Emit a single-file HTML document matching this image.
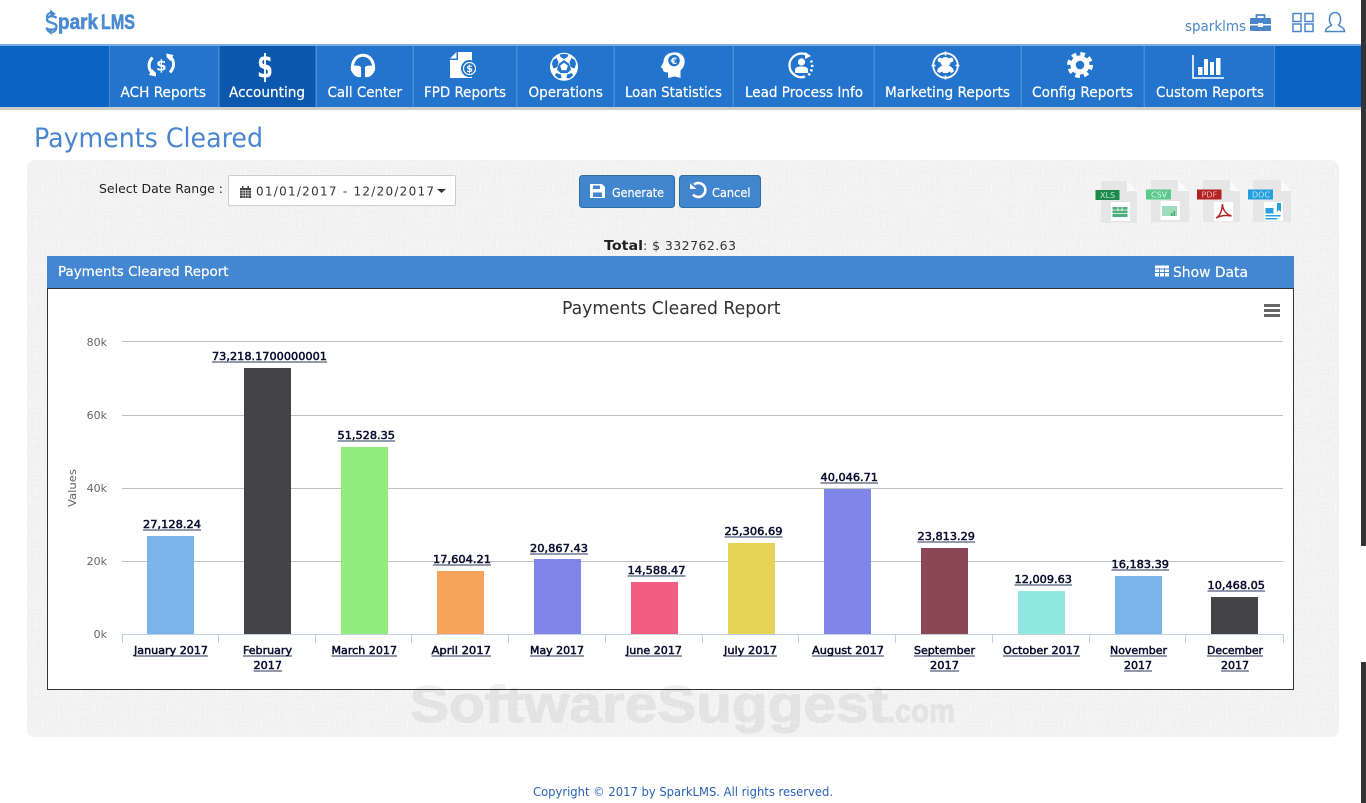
<!DOCTYPE html>
<html lang="en">
<head>
<meta charset="utf-8">
<title>Payments Cleared</title>
<style>
html,body{margin:0;padding:0;background:#fff;width:1366px;height:803px;overflow:hidden}
svg{display:block;position:absolute;left:0;top:0}
text{font-family:"DejaVu Sans","Liberation Sans",sans-serif}
.nav{fill:#fff;font-size:14px;stroke:#fff;stroke-width:.2}
.dl{fill:#0b0b2e;font-size:11px;stroke:#0b0b2e;stroke-width:.5}
.yl{fill:#666;font-size:11px}
.lg{font-family:"Liberation Sans",sans-serif;font-size:21px;font-weight:700;fill:#4a8ad0;stroke:#4a8ad0;stroke-width:.6}
</style>
</head>
<body>
<svg width="1366" height="803" viewBox="0 0 1366 803" xmlns="http://www.w3.org/2000/svg">
<defs>
<pattern id="tx" width="73" height="67" patternUnits="userSpaceOnUse">
<rect width="73" height="67" fill="#f3f3f3"/>
<path d="M3 5h9v6H3zM17 2h5v11h-5zM28 7h14v4H28zM48 3h7v7h-7zM60 6h10v9H60zM5 18h6v10H5zM15 21h12v5H15zM32 16h7v12h-7zM45 19h4v8h-4zM54 22h15v4H54zM2 35h13v4H2zM19 32h5v13h-5zM29 37h10v8H29zM44 33h8v5h-8zM57 35h5v15h-5zM66 32h5v7h-5zM7 48h7v9H7zM19 52h16v4H19zM40 47h5v15h-5zM50 53h6v6h-6zM61 56h9v5H61zM12 61h17v3H12z" fill="none" stroke="#eeeeee" stroke-width=".8"/>
<path d="M6 8h3M19 5v6M31 9h8M51 5v3M63 9h5v3M8 21v5M18 23h6M35 19v6M57 24h8M5 37h7M21 35v7M32 40h5M47 35h3M59 38v8M9 51v4M23 54h8M42 50v9M53 55v2M63 58h5" fill="none" stroke="#f8f8f8" stroke-width=".8"/>
</pattern>
</defs>

<!-- right edge strip -->
<rect x="1361" y="0" width="5" height="546" fill="#333"/>
<rect x="1361" y="662" width="5" height="141" fill="#333"/>

<!-- logo -->
<g fill="none" stroke="#4a8ad0" stroke-width="2.300">
<path d="M56.500 18C54 15.500 47 15.500 47 19.500C47 23.500 56.500 22 56.500 26.500C56.500 30.500 49 30.500 46 28"/>
<path d="M46.500 17C47 14 49 13 51 12.500M56.500 28C56 31 54 32 52 32.500" stroke-width="1.800"/>
</g>
<path d="M50 9.500l6 4.500-5.500 2.500zM52 35l-6-4.500 5.500-2.500z" fill="#4a8ad0"/>
<text class="lg" x="58" y="29" textLength="40" lengthAdjust="spacingAndGlyphs">park</text>
<text class="lg" x="101" y="29" textLength="34" lengthAdjust="spacingAndGlyphs">LMS</text>

<!-- header right -->
<text x="1185" y="31" font-size="14" fill="#4a86c8" textLength="61" lengthAdjust="spacingAndGlyphs">sparklms</text>
<path d="M1251 18h19a1 1 0 0 1 1 1v5h-8v-1h-5v1h-8v-5a1 1 0 0 1 1-1zM1250 25.500h8v1.500h5v-1.500h8V30a1 1 0 0 1-1 1h-19a1 1 0 0 1-1-1z" fill="#4a86c8"/>
<path d="M1256.500 18v-3h8v3" fill="none" stroke="#4a86c8" stroke-width="1.800"/>
<g fill="none" stroke="#4a86c8" stroke-width="1.500">
<rect x="1293" y="13.500" width="8" height="8"/><rect x="1305" y="13.500" width="8" height="8"/>
<rect x="1293" y="24" width="8" height="7.500"/><rect x="1305" y="24" width="8" height="7.500"/>
<path d="M1325.500 31.500c0-4 4-4.500 6-6.500c-3-3-3.500-12 3.500-12.500c7 .5 6.500 9.500 3.500 12.500c2 2 6 2.500 6 6.500z"/>
</g>

<!-- nav -->
<rect x="0" y="44" width="1361" height="2" fill="#79ade3"/>
<rect x="0" y="46" width="1361" height="61" fill="#0a64c4"/>
<rect x="0" y="107" width="1361" height="3" fill="#cccccc"/>
<rect x="109" y="46" width="1166" height="61" fill="#2374cc"/>
<rect x="219" y="46" width="97" height="61" fill="#0b58ae"/>
<g fill="#4a8bd6">
<rect x="109" y="46" width="1" height="61"/><rect x="218" y="46" width="1.500" height="61"/><rect x="315.500" y="46" width="1.500" height="61"/>
<rect x="412.500" y="46" width="1.500" height="61"/><rect x="516" y="46" width="1.500" height="61"/><rect x="613.500" y="46" width="1.500" height="61"/>
<rect x="732.500" y="46" width="1.500" height="61"/><rect x="873.500" y="46" width="1.500" height="61"/><rect x="1020.500" y="46" width="1.500" height="61"/>
<rect x="1143.500" y="46" width="1.500" height="61"/><rect x="1274" y="46" width="1" height="61"/>
</g>
<text class="nav" x="120.500" y="97" textLength="85.500" lengthAdjust="spacingAndGlyphs">ACH Reports</text>
<text class="nav" x="229" y="97" textLength="76" lengthAdjust="spacingAndGlyphs">Accounting</text>
<text class="nav" x="327.500" y="97" textLength="74.500" lengthAdjust="spacingAndGlyphs">Call Center</text>
<text class="nav" x="424" y="97" textLength="82" lengthAdjust="spacingAndGlyphs">FPD Reports</text>
<text class="nav" x="528.500" y="97" textLength="74.500" lengthAdjust="spacingAndGlyphs">Operations</text>
<text class="nav" x="625" y="97" textLength="97" lengthAdjust="spacingAndGlyphs">Loan Statistics</text>
<text class="nav" x="745" y="97" textLength="118" lengthAdjust="spacingAndGlyphs">Lead Process Info</text>
<text class="nav" x="885" y="97" textLength="125" lengthAdjust="spacingAndGlyphs">Marketing Reports</text>
<text class="nav" x="1032" y="97" textLength="101" lengthAdjust="spacingAndGlyphs">Config Reports</text>
<text class="nav" x="1156" y="97" textLength="108" lengthAdjust="spacingAndGlyphs">Custom Reports</text>

<!-- nav icons -->
<!-- ACH -->
<g fill="none" stroke="#fff" stroke-width="3">
<path d="M152.500 57.500C147.500 63 148 70 153.500 73.500"/>
<path d="M170 72.500C175 67 174.500 60 169.500 56"/>
</g>
<path d="M156 73v3.500l-7-1.500 3-6zM166.500 57v-3.500l7 1.500-3 6z" fill="#fff"/>
<text x="161.300" y="70.500" text-anchor="middle" font-size="15" font-weight="700" fill="#fff">$</text>
<!-- Accounting -->
<text x="265" y="77.500" text-anchor="middle" font-size="32" font-weight="700" fill="#fff" textLength="16" lengthAdjust="spacingAndGlyphs">$</text>
<!-- Call center -->
<path d="M352.500 71C350 50 376 50 373.500 71" fill="none" stroke="#fff" stroke-width="3"/>
<path d="M351 67c2-2 8-2 10 0v10c-5 1-10-3-10-10zM375 67c-2-2-8-2-10 0v10c5 1 10-3 10-10z" fill="#fff"/>
<!-- FPD -->
<path d="M458 52H472V78H450V60H458z" fill="#fff"/>
<path d="M450 58.500L456.500 52V58.500z" fill="#fff"/>
<circle cx="469.500" cy="68.500" r="8.500" fill="#2374cc"/>
<circle cx="469.500" cy="68.500" r="6" fill="#2374cc" stroke="#fff" stroke-width="1.200"/>
<text x="469.500" y="72" text-anchor="middle" font-size="9.500" font-weight="700" fill="#fff">$</text>
<!-- Operations -->
<circle cx="564" cy="66.800" r="14" fill="#fff"/>
<path d="M559.500 54.500q4.500-1 9 0l-1 2.500-3.500 2-3.500-2zM553 60l3.500-2 2 4-1 5-4 1.500-1.500-4.500zM575 60l-3.500-2-2 4 1 5 4 1.500 1.500-4.500zM556 73l5 1.500 .5 3.500-3 .5-3.500-3zM572 73l-5 1.500-.5 3.500 3 .5 3.500-3z" fill="#2374cc"/>
<path d="M564 60l5 3.600 2 6-3.500 3.500h-7l-3.500-3.500 2-6z" fill="#2374cc"/>
<path d="M564 62.800l3.900 2.800-1.500 4.600h-4.800l-1.500-4.600z" fill="#fff"/>
<!-- Loan -->
<path d="M668 78V72.500C661 72 664 69 662.500 68.500C659.500 67.500 662.500 64.500 663.500 62C664 52 674 52 677 52.500C686 54 687 65 680.500 70.500V78L675 76.500z" fill="#fff"/>
<circle cx="674" cy="60.500" r="5.800" fill="#2374cc"/>
<text x="674" y="64" text-anchor="middle" font-size="9" font-weight="700" fill="#fff">€</text>
<!-- Lead -->
<path d="M808 55.500C799 50 789 57 789.500 66C790 74 798 79 805 76.500" fill="none" stroke="#fff" stroke-width="2.300"/>
<path d="M805 52l6 4-6 3z" fill="#fff"/>
<path d="M811 60.500a13 13 0 0 1 -3 15" fill="none" stroke="#fff" stroke-width="2.500" stroke-dasharray="2.200 2.300"/>
<circle cx="801.500" cy="62" r="3.600" fill="#fff"/>
<path d="M795 73v-3c0-3 3-3.500 6.500-3.500s6.500 .5 6.500 3.500v3z" fill="#fff"/>
<!-- Marketing -->
<circle cx="945.500" cy="65.500" r="12.300" fill="none" stroke="#fff" stroke-width="1.800"/>
<path d="M945.500 51.500v4M945.500 75.500v4M931.500 65.500h4M955.500 65.500h4" stroke="#fff" stroke-width="1.600"/>
<circle cx="940" cy="60" r="2.400" fill="#fff"/><circle cx="951" cy="60" r="2.400" fill="#fff"/>
<circle cx="945.500" cy="62" r="5" fill="#fff"/>
<path d="M941 66h9l3 2.500 1 3-2.500 1.500-2.500-1.500-1 1.500h-5l-1-1.500-2.500 1.500-2.500-1.500 1-3z" fill="#fff"/>
<!-- Gear -->
<circle cx="1080" cy="65" r="9.500" fill="#fff"/>
<circle cx="1080" cy="65" r="11" fill="none" stroke="#fff" stroke-width="4" stroke-dasharray="4.600 4.040"/>
<circle cx="1080" cy="65" r="4.300" fill="#2374cc"/>
<!-- Custom -->
<path d="M1193 55V78H1224" fill="none" stroke="#fff" stroke-width="1.600"/>
<path d="M1198 67h4.500v8H1198zM1204 59h4v16h-4zM1210 62h4v13h-4zM1216 58h4.500v17H1216z" fill="#fff"/>

<!-- page title -->
<text x="34" y="147" font-size="27" fill="#4a86d0" textLength="229" lengthAdjust="spacingAndGlyphs">Payments Cleared</text>

<!-- panel -->
<rect x="27" y="160" width="1312" height="577" rx="8" fill="url(#tx)"/>

<text x="99" y="193" font-size="12.500" fill="#222" textLength="124" lengthAdjust="spacingAndGlyphs">Select Date Range :</text>
<rect x="228.500" y="175.500" width="227" height="30" rx="1.500" fill="#fff" stroke="#ccc"/>
<g fill="#444">
<path d="M240 188h11v10h-11zM242 186h1.500v3H242zM247.500 186h1.500v3h-1.500z"/>
</g>
<path d="M240 190.500h11M240 193h11M240 195.500h11M243 190v8M245.500 190v8M248 190v8" stroke="#fff" stroke-width=".6"/>
<text x="256" y="195.500" font-size="12" fill="#333" textLength="178" lengthAdjust="spacing">01/01/2017 - 12/20/2017</text>
<path d="M437 189h9l-4.500 4z" fill="#333"/>

<rect x="579.500" y="175.500" width="95" height="32" rx="3" fill="#4285cf" stroke="#2e6da4"/>
<rect x="679.500" y="175.500" width="81" height="32" rx="3" fill="#4285cf" stroke="#2e6da4"/>
<path d="M590 184h12l3 3v11h-15z" fill="#fff"/>
<path d="M593 185.500h7v3.500h-7zM593 192.500h9V197h-9z" fill="#4285cf"/>
<text x="612" y="197" font-size="12.500" fill="#fff" stroke="#fff" stroke-width=".2" textLength="52" lengthAdjust="spacingAndGlyphs">Generate</text>
<path d="M694 184.500a7 7 0 1 1 -1 10" fill="none" stroke="#fff" stroke-width="2.600"/>
<path d="M690 183.500l6.500 5.500h-6.500z" fill="#fff"/>
<text x="712" y="197" font-size="12.500" fill="#fff" stroke="#fff" stroke-width=".2" textLength="38.500" lengthAdjust="spacingAndGlyphs">Cancel</text>

<!-- export icons -->
<g>
<path d="M1101 181h26l10 10v32h-36z" fill="#e6e6e6"/><path d="M1127 181l10 10h-10z" fill="#fafafa"/>
<rect x="1095.500" y="190" width="24" height="10" fill="#1d8a4c"/>
<text x="1100" y="198" font-size="8" fill="#bfe8cf">XLS</text>
<rect x="1111" y="202" width="19" height="19" fill="#fff"/>
<path d="M1112.500 207h15v10h-15z" fill="#4cae78"/><path d="M1112.500 210h15M1112.500 213.500h15M1118 207v4M1122 207v4" stroke="#fff" stroke-width=".8"/>

<path d="M1151 180h27l11 11v31h-38z" fill="#e6e6e6"/><path d="M1178 180l11 11h-11z" fill="#fafafa"/>
<rect x="1146" y="189.500" width="25" height="10" fill="#5cc98c"/>
<text x="1151" y="197.500" font-size="8" fill="#dcf5e6">CSV</text>
<rect x="1160.500" y="201" width="19.500" height="19" fill="#fff"/>
<path d="M1162 206h15v10h-15z" fill="#9fdcba"/><path d="M1171 216v-3h1.500v3zM1173.500 216v-5h1.500v5z" fill="#3fa869"/>

<path d="M1203 180h27l10 11v31h-37z" fill="#e6e6e6"/><path d="M1230 180l10 11h-10z" fill="#fafafa"/>
<rect x="1197" y="189.500" width="24.500" height="10" fill="#b22222"/>
<text x="1201.500" y="197.500" font-size="8" fill="#eeb6b6">PDF</text>
<rect x="1214" y="202" width="19" height="19" fill="#fff"/>
<path d="M1216 218c4-2 6-8 6.500-14c0 5 3 10 9 12c-5-1-10-1-15.500 2z" fill="none" stroke="#b3242a" stroke-width="1.500"/>

<path d="M1253 180h28l10 11v31h-38z" fill="#e6e6e6"/><path d="M1281 180l10 11h-10z" fill="#fafafa"/>
<rect x="1248" y="189.500" width="25" height="10" fill="#25a0de"/>
<text x="1252" y="197.500" font-size="8" fill="#bfe4f7">DOC</text>
<rect x="1264" y="202" width="19" height="19" fill="#fff"/>
<path d="M1265.500 208h8v5.500h-8zM1277 203h4v9l-2-2-2 2zM1265.500 215h15v1.500h-15zM1265.500 218h12v1.500h-12z" fill="#29a0dc"/>
</g>

<!-- total -->
<text x="604" y="250" font-size="13" font-weight="700" fill="#222" textLength="39" lengthAdjust="spacingAndGlyphs">Total</text>
<text x="643" y="250" font-size="12.500" fill="#333" textLength="93" lengthAdjust="spacing">: $ 332762.63</text>

<!-- report header -->
<rect x="47" y="256" width="1247" height="32" fill="#4386d1"/>
<text x="58" y="276" font-size="13" fill="#fff" stroke="#fff" stroke-width=".2" textLength="170.500" lengthAdjust="spacingAndGlyphs">Payments Cleared Report</text>
<rect x="1155" y="265.500" width="14" height="11" fill="#fff"/>
<path d="M1155 269h14M1155 272.500h14M1159.500 268v9M1164.500 268v9" stroke="#4386d1" stroke-width=".9"/>
<text x="1173" y="277" font-size="14" fill="#fff" stroke="#fff" stroke-width=".15" textLength="75" lengthAdjust="spacingAndGlyphs">Show Data</text>

<!-- chart box -->
<rect x="47.500" y="288.500" width="1246" height="401" fill="#fff" stroke="#333"/>
<text x="562" y="314" font-size="17.500" fill="#333" textLength="218.500" lengthAdjust="spacingAndGlyphs">Payments Cleared Report</text>
<path d="M1264 305.500h16M1264 310.500h16M1264 315.500h16" stroke="#666" stroke-width="3"/>

<!-- grid -->
<g stroke="#c0c0c0" stroke-width="1">
<path d="M122 341.500H1283M122 415.500H1283M122 488.500H1283M122 561.500H1283"/>
</g>
<text class="yl" x="107" y="346" text-anchor="end">80k</text>
<text class="yl" x="107" y="419" text-anchor="end">60k</text>
<text class="yl" x="107" y="492" text-anchor="end">40k</text>
<text class="yl" x="107" y="565" text-anchor="end">20k</text>
<text class="yl" x="107" y="638" text-anchor="end">0k</text>
<text class="yl" transform="translate(76 507) rotate(-90)" textLength="38" lengthAdjust="spacingAndGlyphs">Values</text>

<!-- bars -->
<rect x="147" y="536" width="47" height="98" fill="#7cb5ec"/>
<rect x="244" y="368" width="47" height="266" fill="#434348"/>
<rect x="341" y="447" width="47" height="187" fill="#90ed7d"/>
<rect x="437" y="571" width="47" height="63" fill="#f7a35c"/>
<rect x="534" y="559" width="47" height="75" fill="#8085e9"/>
<rect x="631" y="582" width="47" height="52" fill="#f15c80"/>
<rect x="728" y="543" width="47" height="91" fill="#e4d354"/>
<rect x="824" y="489" width="47" height="145" fill="#8085e8"/>
<rect x="921" y="548" width="47" height="86" fill="#8d4653"/>
<rect x="1018" y="591" width="47" height="43" fill="#91e8e1"/>
<rect x="1115" y="576" width="47" height="58" fill="#7cb5ec"/>
<rect x="1211" y="597" width="47" height="37" fill="#434348"/>

<!-- x axis -->
<path d="M122 634.500H1283.500M122.500 634v9M218.500 634v9M315.500 634v9M411.500 634v9M508.500 634v9M605.500 634v9M702.500 634v9M798.500 634v9M895.500 634v9M992.500 634v9M1089.500 634v9M1185.500 634v9M1283.500 634v9" fill="none" stroke="#c0d0e0"/>

<!-- data labels -->
<g>
<path d="M143 530H201M212 362H327M337.500 441H395M433 565H491M530 554H588M627.500 576H685.500M724.500 537H782.500M820.500 483H878M917.500 542H975M1014.500 585H1072M1111.500 570H1169M1207.500 591H1265" stroke="#6f7a90" stroke-width="1.500"/>
<text class="dl" x="143" y="528" textLength="58" lengthAdjust="spacingAndGlyphs">27,128.24</text>
<text class="dl" x="212" y="360" textLength="115" lengthAdjust="spacingAndGlyphs">73,218.1700000001</text>
<text class="dl" x="337.500" y="439" textLength="57.500" lengthAdjust="spacingAndGlyphs">51,528.35</text>
<text class="dl" x="433" y="563" textLength="58" lengthAdjust="spacingAndGlyphs">17,604.21</text>
<text class="dl" x="530" y="552" textLength="58" lengthAdjust="spacingAndGlyphs">20,867.43</text>
<text class="dl" x="627.500" y="574" textLength="58" lengthAdjust="spacingAndGlyphs">14,588.47</text>
<text class="dl" x="724.500" y="535" textLength="58" lengthAdjust="spacingAndGlyphs">25,306.69</text>
<text class="dl" x="820.500" y="481" textLength="57.500" lengthAdjust="spacingAndGlyphs">40,046.71</text>
<text class="dl" x="917.500" y="540" textLength="57.500" lengthAdjust="spacingAndGlyphs">23,813.29</text>
<text class="dl" x="1014.500" y="583" textLength="57.500" lengthAdjust="spacingAndGlyphs">12,009.63</text>
<text class="dl" x="1111.500" y="568" textLength="57.500" lengthAdjust="spacingAndGlyphs">16,183.39</text>
<text class="dl" x="1207.500" y="589" textLength="57.500" lengthAdjust="spacingAndGlyphs">10,468.05</text>
</g>

<!-- x labels -->
<g>
<path d="M134 656H208M243 656H292M253.500 671H282M331.500 656H397M431.500 656H491M530 656H584M626 656H682M724 656H777M812 656H884M914 656H975M930 671H959M1003 656H1080M1110 656H1167M1124 671H1152M1207 656H1263M1221 671H1249" stroke="#6f7a90" stroke-width="1.500"/>
<text class="dl" x="134" y="654" textLength="74" lengthAdjust="spacingAndGlyphs">January 2017</text>
<text class="dl" x="243" y="654" textLength="49" lengthAdjust="spacingAndGlyphs">February</text>
<text class="dl" x="253.500" y="669" textLength="28.500" lengthAdjust="spacingAndGlyphs">2017</text>
<text class="dl" x="331.500" y="654" textLength="65.500" lengthAdjust="spacingAndGlyphs">March 2017</text>
<text class="dl" x="431.500" y="654" textLength="59.500" lengthAdjust="spacingAndGlyphs">April 2017</text>
<text class="dl" x="530" y="654" textLength="54" lengthAdjust="spacingAndGlyphs">May 2017</text>
<text class="dl" x="626" y="654" textLength="56" lengthAdjust="spacingAndGlyphs">June 2017</text>
<text class="dl" x="724" y="654" textLength="53" lengthAdjust="spacingAndGlyphs">July 2017</text>
<text class="dl" x="812" y="654" textLength="72" lengthAdjust="spacingAndGlyphs">August 2017</text>
<text class="dl" x="914" y="654" textLength="61" lengthAdjust="spacingAndGlyphs">September</text>
<text class="dl" x="930" y="669" textLength="29" lengthAdjust="spacingAndGlyphs">2017</text>
<text class="dl" x="1003" y="654" textLength="77" lengthAdjust="spacingAndGlyphs">October 2017</text>
<text class="dl" x="1110" y="654" textLength="57" lengthAdjust="spacingAndGlyphs">November</text>
<text class="dl" x="1124" y="669" textLength="28" lengthAdjust="spacingAndGlyphs">2017</text>
<text class="dl" x="1207" y="654" textLength="56" lengthAdjust="spacingAndGlyphs">December</text>
<text class="dl" x="1221" y="669" textLength="28" lengthAdjust="spacingAndGlyphs">2017</text>
</g>

<!-- watermark -->
<g opacity=".055" fill="#000" stroke="#000" stroke-width="1.200" style="font-family:'Liberation Sans',sans-serif" font-weight="700">
<text x="410" y="722" font-size="52" style="font-family:'Liberation Sans',sans-serif" textLength="478" lengthAdjust="spacingAndGlyphs">SoftwareSuggest</text>
<text x="887" y="722" font-size="32" style="font-family:'Liberation Sans',sans-serif" textLength="68" lengthAdjust="spacingAndGlyphs">.com</text>
</g>

<!-- footer -->
<text x="533" y="796" font-size="12" fill="#2a62b8" textLength="300" lengthAdjust="spacingAndGlyphs">Copyright © 2017 by SparkLMS. All rights reserved.</text>
</svg>
</body>
</html>
